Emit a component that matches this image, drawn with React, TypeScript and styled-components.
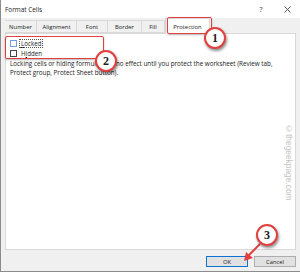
import React from 'react'
import styled, { createGlobalStyle } from 'styled-components'

const GlobalStyle = createGlobalStyle`
    html, body {
        margin: 0;
        padding: 0;
        background: #ffffff;
    }
    body {
        font-family: 'Open Sans', 'Liberation Sans', sans-serif;
        color: #1a1a1a;
    }
`

const RED = '#e2403f'

const Window = styled.div`
    position: relative;
    width: 300px;
    height: 272px;
    box-sizing: border-box;
    background: #f0f0f0;
    border-left: 1px solid #8c8c8c;
    border-bottom: 1px solid #8c8c8c;
    display: flex;
    flex-direction: column;
    overflow: hidden;
`

const TitleBar = styled.div`
    height: 18px;
    flex: none;
    background: #ffffff;
    display: flex;
    align-items: center;
    padding-left: 4px;
    font-size: 6.4px;
    color: #222;
`

const TitleText = styled.span`
    flex: 1;
`

const TitleButton = styled.span<{ $mr: number }>`
    width: 14px;
    display: flex;
    justify-content: center;
    align-items: center;
    font-size: 7px;
    color: #444;
    margin-right: ${(p) => p.$mr}px;
`

const TabStrip = styled.div`
    margin-top: 2px;
    padding-left: 4px;
    height: 13px;
    flex: none;
    display: flex;
    align-items: flex-end;
    position: relative;
    z-index: 1;
`

const Tab = styled.div<{ $w: number; $active?: boolean }>`
    width: ${(p) => p.$w}px;
    height: ${(p) => (p.$active ? 16 : 13)}px;
    box-sizing: border-box;
    margin-bottom: ${(p) => (p.$active ? -1 : 0)}px;
    display: flex;
    align-items: center;
    justify-content: center;
    font-size: 5.9px;
    color: #222;
    background: ${(p) => (p.$active ? '#ffffff' : '#f0f0f0')};
    border: 1px solid #d9d9d9;
    border-bottom: ${(p) => (p.$active ? 'none' : '1px solid #d9d9d9')};
    border-left: ${(p) => (p.$active ? '1px solid #d9d9d9' : 'none')};
`

const Panel = styled.div`
    margin: 0 4px;
    height: 217px;
    flex: none;
    box-sizing: border-box;
    background: #ffffff;
    border: 1px solid #d9d9d9;
    padding: 4px 4px 0 4px;
    font-size: 6.2px;
`

const CheckRow = styled.div`
    height: 10px;
    display: flex;
    align-items: center;
    gap: 3px;
`

const Box = styled.span<{ $focus?: boolean }>`
    width: 7px;
    height: 7px;
    box-sizing: border-box;
    background: #fff;
    border: 1px solid ${(p) => (p.$focus ? '#6f9fd8' : '#444')};
`

const Label = styled.span<{ $focus?: boolean }>`
    outline: ${(p) => (p.$focus ? '1px dotted #555' : 'none')};
    padding: 0 1px;
    line-height: 7px;
`

const Key = styled.span`
    text-decoration: underline;
`

const Description = styled.p`
    margin: 1px 0 0 0;
    width: 278px;
    font-size: 6.3px;
    line-height: 9px;
    color: #1a1a1a;
`

const Footer = styled.div`
    display: flex;
    justify-content: flex-end;
    gap: 6px;
    padding: 6px 4px 0 0;
`

const Button = styled.button<{ $primary?: boolean }>`
    width: 42px;
    height: 11px;
    padding: 0;
    box-sizing: border-box;
    font-family: inherit;
    font-size: 5.8px;
    color: #222;
    background: #e1e1e1;
    border: 1px solid ${(p) => (p.$primary ? '#0a74d4' : '#adadad')};
`

const Highlight = styled.div<{ $x: number; $y: number; $w: number; $h: number }>`
    position: absolute;
    left: ${(p) => p.$x}px;
    top: ${(p) => p.$y}px;
    width: ${(p) => p.$w}px;
    height: ${(p) => p.$h}px;
    box-sizing: border-box;
    border: 1.6px solid ${RED};
    border-radius: 2px;
    box-shadow: 0 1px 2px rgba(0, 0, 0, 0.3);
    z-index: 5;
`

const Callout = styled.div<{ $x: number; $y: number }>`
    position: absolute;
    left: ${(p) => p.$x - 11}px;
    top: ${(p) => p.$y - 11}px;
    width: 22px;
    height: 22px;
    box-sizing: border-box;
    border-radius: 50%;
    border: 2px solid ${RED};
    background: #ffffff;
    box-shadow: 1px 2px 3px rgba(0, 0, 0, 0.45);
    display: flex;
    align-items: center;
    justify-content: center;
    font-family: 'Liberation Serif', serif;
    font-weight: bold;
    font-size: 12px;
    color: #1d1d1d;
    z-index: 7;
`

const Arrow = styled.svg`
    position: absolute;
    left: 0;
    top: 0;
    width: 300px;
    height: 273px;
    pointer-events: none;
    z-index: 6;
`

const Watermark = styled.div`
    position: absolute;
    left: 283px;
    top: 124px;
    writing-mode: vertical-rl;
    font-family: 'Liberation Sans', sans-serif;
    font-size: 8.4px;
    color: #c4c4c4;
    z-index: 4;
`

const tabs = [
    { label: 'Number', w: 32 },
    { label: 'Alignment', w: 40 },
    { label: 'Font', w: 31 },
    { label: 'Border', w: 34 },
    { label: 'Fill', w: 23 },
    { label: 'Protection', w: 45, active: true },
]

const App: React.FC = () => {
    return (
        <>
            <GlobalStyle />
            <Window>
                <TitleBar>
                    <TitleText>Format Cells</TitleText>
                    <TitleButton $mr={12}>?</TitleButton>
                    <TitleButton $mr={6}>
                        <svg width="7" height="7" viewBox="0 0 7 7">
                            <path d="M0.5 0.5 L6.5 6.5 M6.5 0.5 L0.5 6.5" stroke="#444" strokeWidth="0.9" />
                        </svg>
                    </TitleButton>
                </TitleBar>
                <TabStrip>
                    {tabs.map((t) => (
                        <Tab key={t.label} $w={t.w} $active={t.active}>
                            {t.label}
                        </Tab>
                    ))}
                </TabStrip>
                <Panel>
                    <CheckRow>
                        <Box $focus />
                        <Label $focus>
                            <Key>L</Key>ocked
                        </Label>
                    </CheckRow>
                    <CheckRow>
                        <Box />
                        <Label>
                            H<Key>i</Key>dden
                        </Label>
                    </CheckRow>
                    <Description>
                        Locking cells or hiding formulas has no effect until you protect the worksheet (Review tab,
                        Protect group, Protect Sheet button).
                    </Description>
                </Panel>
                <Footer>
                    <Button $primary>OK</Button>
                    <Button>Cancel</Button>
                </Footer>

                <Highlight $x={166} $y={17} $w={45} $h={17} />
                <Highlight $x={4} $y={36} $w={99} $h={23} />
                <Callout $x={214} $y={38}>1</Callout>
                <Callout $x={105} $y={61}>2</Callout>
                <Callout $x={266} $y={235}>3</Callout>
                <Arrow viewBox="0 0 300 273">
                    <line x1="259" y1="244" x2="247" y2="256" stroke={RED} strokeWidth="2" />
                    <polygon points="243,261 245,252 252,258" fill={RED} />
                </Arrow>
                <Watermark>©thegeekpage.com</Watermark>
            </Window>
        </>
    )
}

export default App
